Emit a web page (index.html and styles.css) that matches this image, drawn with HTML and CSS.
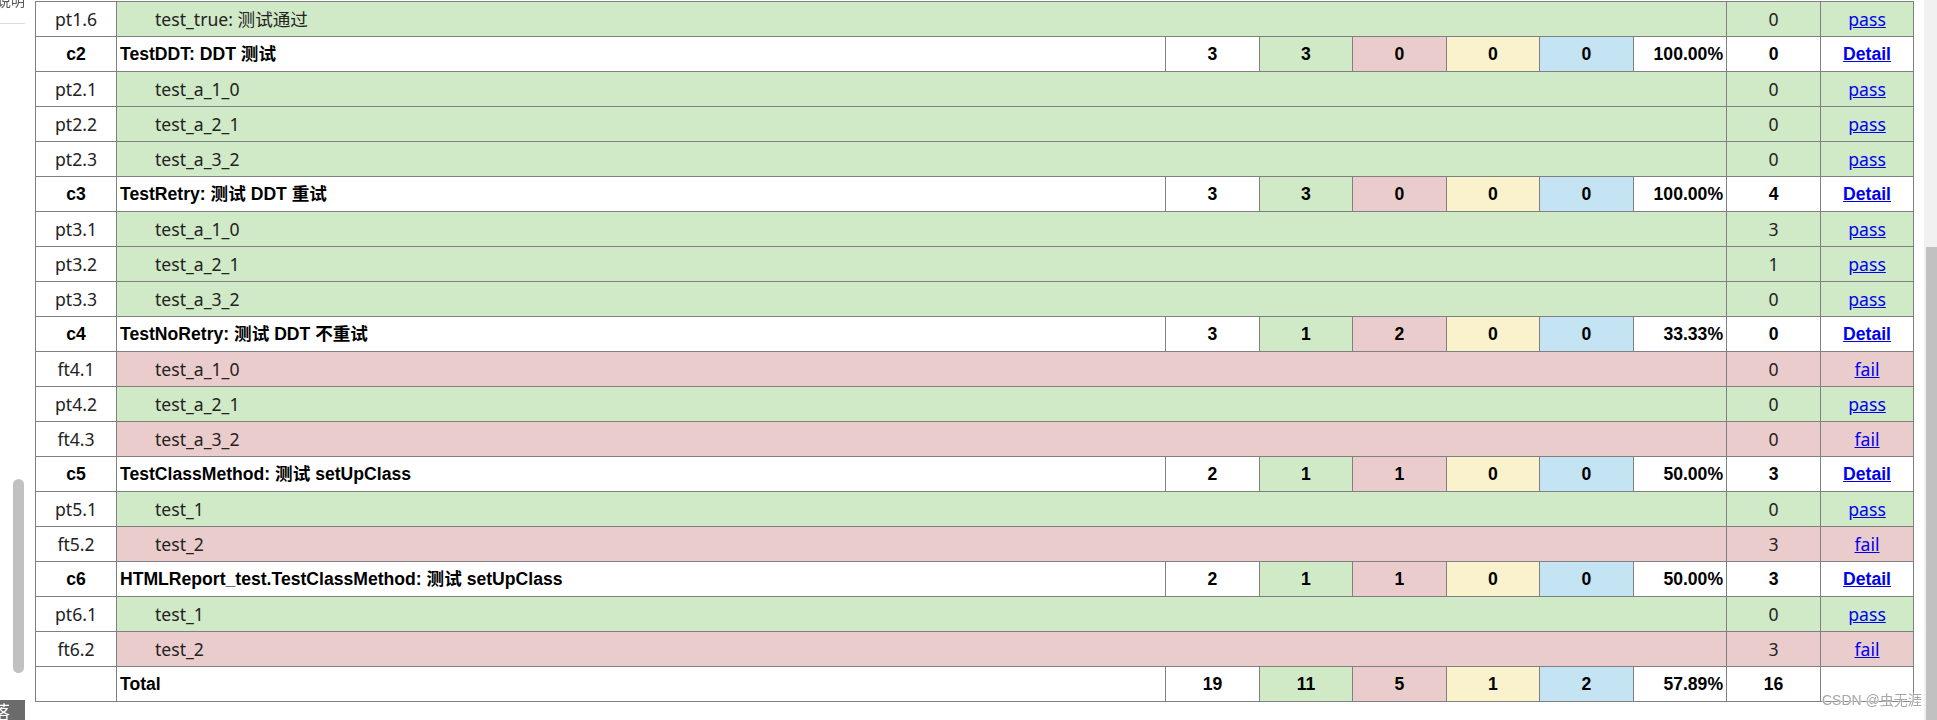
FILE: index.html
```html
<!DOCTYPE html>
<html lang="zh-CN">
<head>
<meta charset="utf-8">
<title>测试报告</title>
<link rel="stylesheet" href="styles.css">
</head>
<body>
<aside class="toc">
  <div class="toc-title">说明</div>
  <div class="toc-line"></div>
  <div class="toc-thumb"></div>
  <div class="toc-tag">落</div>
</aside>

<main class="report">
<table class="result">
  <colgroup>
    <col class="c-id"><col class="c-name"><col class="c-num"><col class="c-num2"><col class="c-num"><col class="c-num2"><col class="c-num"><col class="c-num2"><col class="c-num"><col class="c-num2">
  </colgroup>
  <tbody>
    <tr class="case-row"><td class="id">pt1.6</td><td class="name pass-bg" colspan="7">test_true: 测试通过</td><td class="pass-bg">0</td><td class="pass-bg"><a href="#">pass</a></td></tr>

    <tr class="class-row"><td class="id">c2</td><td class="name">TestDDT: DDT 测试</td><td>3</td><td class="pass-bg">3</td><td class="fail-bg">0</td><td class="error-bg">0</td><td class="skip-bg">0</td><td class="rate">100.00%</td><td>0</td><td><a href="#">Detail</a></td></tr>
    <tr class="case-row"><td class="id">pt2.1</td><td class="name pass-bg" colspan="7">test_a_1_0</td><td class="pass-bg">0</td><td class="pass-bg"><a href="#">pass</a></td></tr>
    <tr class="case-row"><td class="id">pt2.2</td><td class="name pass-bg" colspan="7">test_a_2_1</td><td class="pass-bg">0</td><td class="pass-bg"><a href="#">pass</a></td></tr>
    <tr class="case-row"><td class="id">pt2.3</td><td class="name pass-bg" colspan="7">test_a_3_2</td><td class="pass-bg">0</td><td class="pass-bg"><a href="#">pass</a></td></tr>

    <tr class="class-row"><td class="id">c3</td><td class="name">TestRetry: 测试 DDT 重试</td><td>3</td><td class="pass-bg">3</td><td class="fail-bg">0</td><td class="error-bg">0</td><td class="skip-bg">0</td><td class="rate">100.00%</td><td>4</td><td><a href="#">Detail</a></td></tr>
    <tr class="case-row"><td class="id">pt3.1</td><td class="name pass-bg" colspan="7">test_a_1_0</td><td class="pass-bg">3</td><td class="pass-bg"><a href="#">pass</a></td></tr>
    <tr class="case-row"><td class="id">pt3.2</td><td class="name pass-bg" colspan="7">test_a_2_1</td><td class="pass-bg">1</td><td class="pass-bg"><a href="#">pass</a></td></tr>
    <tr class="case-row"><td class="id">pt3.3</td><td class="name pass-bg" colspan="7">test_a_3_2</td><td class="pass-bg">0</td><td class="pass-bg"><a href="#">pass</a></td></tr>

    <tr class="class-row"><td class="id">c4</td><td class="name">TestNoRetry: 测试 DDT 不重试</td><td>3</td><td class="pass-bg">1</td><td class="fail-bg">2</td><td class="error-bg">0</td><td class="skip-bg">0</td><td class="rate">33.33%</td><td>0</td><td><a href="#">Detail</a></td></tr>
    <tr class="case-row"><td class="id">ft4.1</td><td class="name fail-bg" colspan="7">test_a_1_0</td><td class="fail-bg">0</td><td class="fail-bg"><a href="#">fail</a></td></tr>
    <tr class="case-row"><td class="id">pt4.2</td><td class="name pass-bg" colspan="7">test_a_2_1</td><td class="pass-bg">0</td><td class="pass-bg"><a href="#">pass</a></td></tr>
    <tr class="case-row"><td class="id">ft4.3</td><td class="name fail-bg" colspan="7">test_a_3_2</td><td class="fail-bg">0</td><td class="fail-bg"><a href="#">fail</a></td></tr>

    <tr class="class-row"><td class="id">c5</td><td class="name">TestClassMethod: 测试 setUpClass</td><td>2</td><td class="pass-bg">1</td><td class="fail-bg">1</td><td class="error-bg">0</td><td class="skip-bg">0</td><td class="rate">50.00%</td><td>3</td><td><a href="#">Detail</a></td></tr>
    <tr class="case-row"><td class="id">pt5.1</td><td class="name pass-bg" colspan="7">test_1</td><td class="pass-bg">0</td><td class="pass-bg"><a href="#">pass</a></td></tr>
    <tr class="case-row"><td class="id">ft5.2</td><td class="name fail-bg" colspan="7">test_2</td><td class="fail-bg">3</td><td class="fail-bg"><a href="#">fail</a></td></tr>

    <tr class="class-row"><td class="id">c6</td><td class="name">HTMLReport_test.TestClassMethod: 测试 setUpClass</td><td>2</td><td class="pass-bg">1</td><td class="fail-bg">1</td><td class="error-bg">0</td><td class="skip-bg">0</td><td class="rate">50.00%</td><td>3</td><td><a href="#">Detail</a></td></tr>
    <tr class="case-row"><td class="id">pt6.1</td><td class="name pass-bg" colspan="7">test_1</td><td class="pass-bg">0</td><td class="pass-bg"><a href="#">pass</a></td></tr>
    <tr class="case-row"><td class="id">ft6.2</td><td class="name fail-bg" colspan="7">test_2</td><td class="fail-bg">3</td><td class="fail-bg"><a href="#">fail</a></td></tr>

    <tr class="class-row total-row"><td class="id"></td><td class="name">Total</td><td>19</td><td class="pass-bg">11</td><td class="fail-bg">5</td><td class="error-bg">1</td><td class="skip-bg">2</td><td class="rate">57.89%</td><td>16</td><td></td></tr>
  </tbody>
</table>
</main>

<div class="page-scrollbar"><div class="page-thumb"></div></div>
<div class="watermark">CSDN @虫无涯</div>
</body>
</html>
```
FILE: styles.css
```css
html, body {
  margin: 0;
  height: 720px;
  overflow: hidden;
  background: #ffffff;
}

body {
  font-family: "Noto Sans", "Noto Sans CJK SC", sans-serif;
  font-size: 17.6px;
  color: #222222;
}

/* left floating table of contents (mostly off-screen) */
.toc {
  position: fixed;
  left: 0;
  top: 0;
  width: 25px;
  height: 720px;
  overflow: hidden;
}

.toc-title {
  position: absolute;
  left: -3px;
  top: -10px;
  font-family: "Noto Sans CJK SC", sans-serif;
  font-size: 14px;
  line-height: 20px;
  color: #555555;
  white-space: nowrap;
}

.toc-line {
  position: absolute;
  left: 0;
  top: 23px;
  width: 25px;
  height: 1px;
  background: #dddddd;
}

.toc-thumb {
  position: absolute;
  left: 13px;
  top: 479px;
  width: 11px;
  height: 194px;
  border-radius: 6px;
  background: #c1c1c1;
}

.toc-tag {
  position: absolute;
  left: 0;
  top: 700px;
  width: 25px;
  height: 20px;
  background: #6b6b6b;
  color: #ffffff;
  overflow: hidden;
  font-family: "Noto Sans CJK SC", sans-serif;
  font-size: 18px;
  line-height: 22px;
  text-indent: -8px;
}

/* report table */
.report {
  padding: 1px 0 0 35px;
}

.result {
  border-collapse: collapse;
  table-layout: fixed;
  width: 1879px;
}

.c-id { width: 81px; }
.c-name { width: 1049px; }
.c-num { width: 94px; }
.c-num2 { width: 93px; }

.result td {
  border: 1px solid #808080;
  height: 34px;
  padding: 0 3px;
  text-align: center;
  white-space: nowrap;
  overflow: hidden;
  line-height: 20px;
  background: #ffffff;
}

.result td.pass-bg { background: #d0e9c6; }
.result td.fail-bg { background: #ebcccc; }
.result td.error-bg { background: #faf2cc; }
.result td.skip-bg { background: #c4e3f3; }

.case-row td.name {
  text-align: left;
  padding-left: 38px;
}

.class-row td {
  font-family: "Liberation Sans", "Noto Sans CJK SC", sans-serif;
  font-weight: bold;
  color: #000000;
}

.class-row td.name {
  text-align: left;
  padding-left: 3px;
}

.result td.rate {
  text-align: right;
  padding-right: 3px;
}

.result a {
  color: #0000ee;
  text-decoration: underline;
}

/* page scrollbar */
.page-scrollbar {
  position: fixed;
  right: 0;
  top: 0;
  width: 13px;
  height: 720px;
  background: #f1f1f1;
}

.page-thumb {
  position: absolute;
  left: 2px;
  right: 0;
  top: 247px;
  bottom: 0;
  background: #c1c1c1;
}

.watermark {
  position: fixed;
  left: 1822px;
  top: 690px;
  font-family: "Liberation Sans", "Noto Sans CJK SC", sans-serif;
  font-size: 14px;
  line-height: 20px;
  color: #a6a6a6;
  text-shadow: 0 0 2px #ffffff, 0 0 1px #ffffff;
  white-space: nowrap;
}
```
